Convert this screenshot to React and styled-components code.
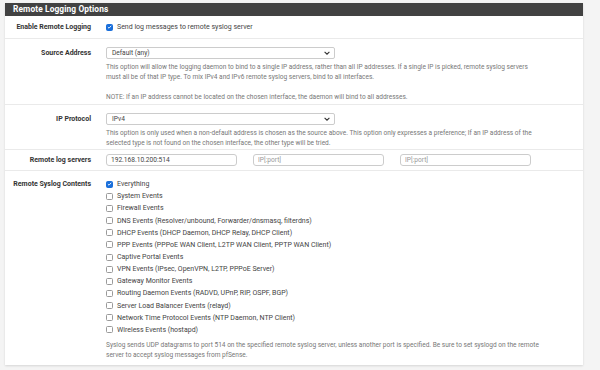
import React from 'react';
import styled, { createGlobalStyle } from 'styled-components';

const Global = createGlobalStyle`
  html, body {
    margin: 0;
    background: #f4f4f4;
    font-family: 'Roboto', 'Liberation Sans', sans-serif;
    color: #333;
  }
`;

const Page = styled.div`
  padding: 3px 17px 5px 5px;
`;

const Panel = styled.section`
  background: #fff;
  box-shadow: 0 1px 2px rgba(0, 0, 0, 0.12);
`;

const Heading = styled.h2`
  margin: 0;
  height: 13px;
  line-height: 13px;
  padding: 0 8px;
  background: #424242;
  color: #fff;
  font-size: 8.4px;
  font-weight: 700;
  letter-spacing: 0.1px;
`;

const Row = styled.div`
  display: grid;
  grid-template-columns: 101px 1fr;
  border-top: ${(p) => (p.first ? 'none' : '1px solid #eaeaea')};
  padding: ${(p) => p.pad || '0'};
  box-sizing: border-box;
  height: ${(p) => p.h}px;
`;

const Label = styled.div`
  text-align: right;
  padding-right: 15px;
  font-size: 7px;
  font-weight: 700;
  color: #333;
  line-height: ${(p) => p.lh || 12}px;
`;

const Content = styled.div`
  padding-right: 8px;
`;

const SelectBox = styled.div`
  width: 229px;
  height: 12px;
  box-sizing: border-box;
  border: 1px solid #ccc;
  border-radius: 2px;
  display: flex;
  align-items: center;
  justify-content: space-between;
  padding: 0 4px 0 5px;
  font-size: 6.6px;
  color: #444;
`;

const Help = styled.p`
  margin: ${(p) => p.top || 3}px 0 0 0;
  font-size: 6.55px;
  line-height: 10px;
  color: #777;
  white-space: nowrap;
`;

const Inputs = styled.div`
  display: flex;
  gap: 16px;
`;

const TextInput = styled.input`
  width: 131px;
  height: 12px;
  box-sizing: border-box;
  border: 1px solid #ccc;
  border-radius: 3px;
  padding: 0 4px;
  font-family: 'Roboto', 'Liberation Sans', sans-serif;
  font-size: 6.6px;
  color: #444;
  outline: none;
  &::placeholder {
    color: #999;
  }
`;

const CheckLine = styled.label`
  display: flex;
  align-items: center;
  gap: 4px;
  height: ${(p) => p.h || 12.17}px;
  font-size: 7px;
  color: #444;
`;

const Box = styled.span`
  width: 7px;
  height: 7px;
  box-sizing: border-box;
  border-radius: 1.5px;
  border: 1px solid ${(p) => (p.checked ? '#1a6fdb' : '#9a9a9a')};
  background: ${(p) => (p.checked ? '#1a6fdb' : '#fff')};
  display: flex;
  align-items: center;
  justify-content: center;
  flex: none;
`;

const Check = ({ checked, children, h }) => (
  <CheckLine h={h}>
    <Box checked={checked}>
      {checked && (
        <svg width="6" height="6" viewBox="0 0 10 10">
          <path d="M1.8 5.2 L4 7.4 L8.4 2.6" fill="none" stroke="#fff" strokeWidth="1.8" />
        </svg>
      )}
    </Box>
    {children}
  </CheckLine>
);

const Chevron = () => (
  <svg width="6" height="4" viewBox="0 0 10 6">
    <path d="M1 1 L5 5 L9 1" fill="none" stroke="#333" strokeWidth="1.8" />
  </svg>
);

const events = [
  ['Everything', true],
  ['System Events'],
  ['Firewall Events'],
  ['DNS Events (Resolver/unbound, Forwarder/dnsmasq, filterdns)'],
  ['DHCP Events (DHCP Daemon, DHCP Relay, DHCP Client)'],
  ['PPP Events (PPPoE WAN Client, L2TP WAN Client, PPTP WAN Client)'],
  ['Captive Portal Events'],
  ['VPN Events (IPsec, OpenVPN, L2TP, PPPoE Server)'],
  ['Gateway Monitor Events'],
  ['Routing Daemon Events (RADVD, UPnP, RIP, OSPF, BGP)'],
  ['Server Load Balancer Events (relayd)'],
  ['Network Time Protocol Events (NTP Daemon, NTP Client)'],
  ['Wireless Events (hostapd)'],
];

export default function App() {
  return (
    <Page>
      <Global />
      <Panel>
        <Heading>Remote Logging Options</Heading>

        <Row first h={22} pad="7px 0 0 0">
          <Label lh={8}>Enable Remote Logging</Label>
          <Content>
            <Check checked h={8}>Send log messages to remote syslog server</Check>
          </Content>
        </Row>

        <Row h={66} pad="8px 0 0 0">
          <Label>Source Address</Label>
          <Content>
            <SelectBox>
              <span>Default (any)</span>
              <Chevron />
            </SelectBox>
            <Help>
              This option will allow the logging daemon to bind to a single IP address, rather than all IP addresses. If a single IP is picked, remote syslog servers
              <br />
              must all be of that IP type. To mix IPv4 and IPv6 remote syslog servers, bind to all interfaces.
              <br />
              <br />
              NOTE: If an IP address cannot be located on the chosen interface, the daemon will bind to all addresses.
            </Help>
          </Content>
        </Row>

        <Row h={45} pad="8px 0 0 0">
          <Label>IP Protocol</Label>
          <Content>
            <SelectBox>
              <span>IPv4</span>
              <Chevron />
            </SelectBox>
            <Help>
              This option is only used when a non-default address is chosen as the source above. This option only expresses a preference; If an IP address of the
              <br />
              selected type is not found on the chosen interface, the other type will be tried.
            </Help>
          </Content>
        </Row>

        <Row h={21} pad="4px 0 0 0">
          <Label>Remote log servers</Label>
          <Inputs>
            <TextInput defaultValue="192.168.10.200:514" />
            <TextInput placeholder="IP[:port]" />
            <TextInput placeholder="IP[:port]" />
          </Inputs>
        </Row>

        <Row h={195} pad="7px 0 0 0">
          <Label>Remote Syslog Contents</Label>
          <Content>
            {events.map(([name, on]) => (
              <Check key={name} checked={!!on}>{name}</Check>
            ))}
            <Help top={4}>
              Syslog sends UDP datagrams to port 514 on the specified remote syslog server, unless another port is specified. Be sure to set syslogd on the remote
              <br />
              server to accept syslog messages from pfSense.
            </Help>
          </Content>
        </Row>
      </Panel>
    </Page>
  );
}
